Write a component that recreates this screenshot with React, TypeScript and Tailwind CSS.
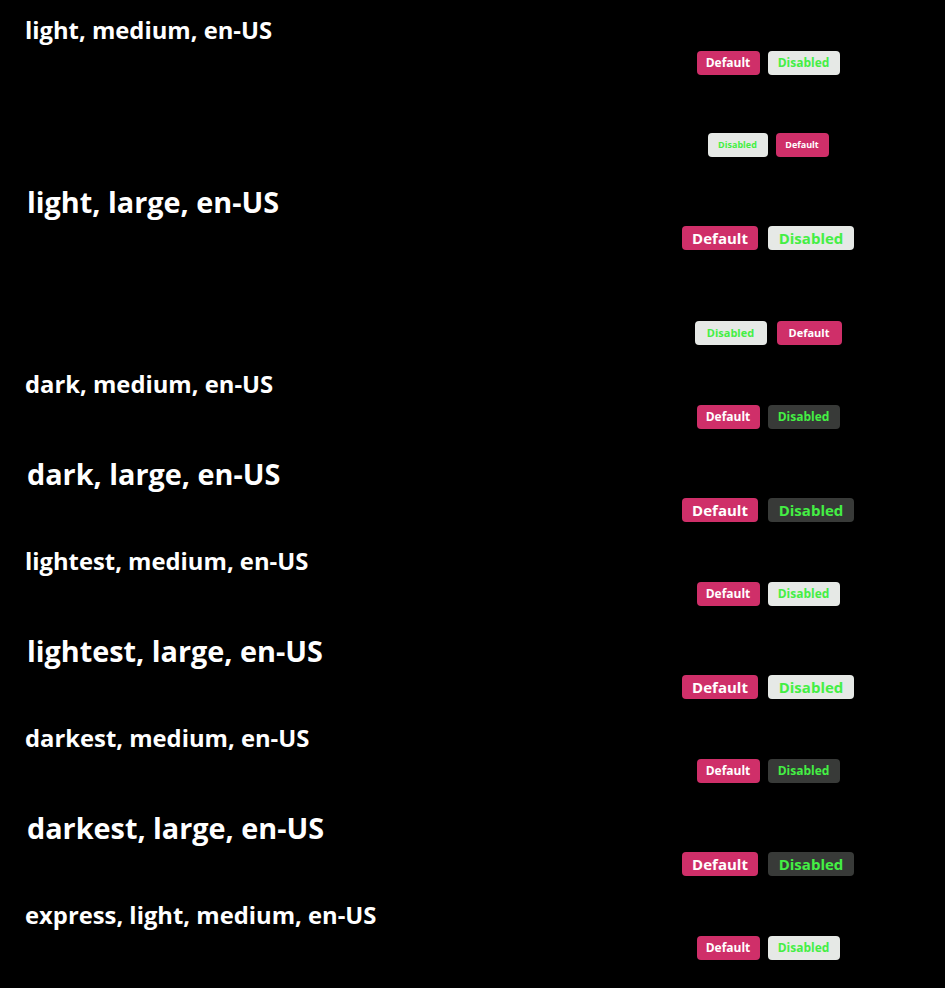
import React from "react";

type B = { label: string; kind: "default" | "disabledLight" | "disabledDark"; w: number; fs: string };

const font = { fontFamily: '"Open Sans", "Noto Sans", sans-serif' };

function Badge({ b }: { b: B }) {
  const cls =
    b.kind === "default"
      ? "bg-[#cf2f69] text-white"
      : b.kind === "disabledLight"
      ? "bg-[#e6e9e6] text-[#44ef44]"
      : "bg-[#383a38] text-[#44ef44]";
  return (
    <div
      className={`h-[24px] rounded-[4px] flex items-center justify-center font-bold ${cls} ${b.fs}`}
      style={{ width: b.w }}
    >
      {b.label}
    </div>
  );
}

function Row({ items, gap = "gap-2" }: { items: B[]; gap?: string }) {
  return (
    <div className={`h-[24px] pl-[591px] flex justify-center ${gap}`}>
      {items.map((b, i) => (
        <Badge key={i} b={b} />
      ))}
    </div>
  );
}

function MediumHeading({ text, h }: { text: string; h: string }) {
  return (
    <div className={`${h} flex items-end pl-[25px] pb-[7px]`}>
      <div className="text-[23.8px] leading-[28px] font-bold text-white">{text}</div>
    </div>
  );
}

function LargeHeading({ text, h }: { text: string; h: string }) {
  return (
    <div className={`${h} flex items-end pl-[27px] pb-[8px]`}>
      <div className="text-[28.8px] leading-[32px] font-bold text-white">{text}</div>
    </div>
  );
}

const medDef = (light: boolean): B[] => [
  { label: "Default", kind: "default", w: 63, fs: "text-[12px]" },
  { label: "Disabled", kind: light ? "disabledLight" : "disabledDark", w: 72, fs: "text-[12px]" },
];
const lgDef = (light: boolean): B[] => [
  { label: "Default", kind: "default", w: 76, fs: "text-[15px]" },
  { label: "Disabled", kind: light ? "disabledLight" : "disabledDark", w: 86, fs: "text-[15px]" },
];

export default function App() {
  return (
    <div className="w-[945px] h-[988px] bg-black overflow-hidden" style={font}>
      <MediumHeading text="light, medium, en-US" h="h-[51px]" />
      <Row items={medDef(true)} />
      <div className="h-[58px]" />
      <Row
        items={[
          { label: "Disabled", kind: "disabledLight", w: 60, fs: "text-[9px]" },
          { label: "Default", kind: "default", w: 53, fs: "text-[9px]" },
        ]}
      />
      <LargeHeading text="light, large, en-US" h="h-[69px]" />
      <Row gap="gap-[10px]" items={lgDef(true)} />
      <div className="h-[71px]" />
      <Row
        gap="gap-[10px]"
        items={[
          { label: "Disabled", kind: "disabledLight", w: 72, fs: "text-[11px]" },
          { label: "Default", kind: "default", w: 65, fs: "text-[11px]" },
        ]}
      />
      <MediumHeading text="dark, medium, en-US" h="h-[60px]" />
      <Row items={medDef(false)} />
      <LargeHeading text="dark, large, en-US" h="h-[69px]" />
      <Row gap="gap-[10px]" items={lgDef(false)} />
      <MediumHeading text="lightest, medium, en-US" h="h-[60px]" />
      <Row items={medDef(true)} />
      <LargeHeading text="lightest, large, en-US" h="h-[69px]" />
      <Row gap="gap-[10px]" items={lgDef(true)} />
      <MediumHeading text="darkest, medium, en-US" h="h-[60px]" />
      <Row items={medDef(false)} />
      <LargeHeading text="darkest, large, en-US" h="h-[69px]" />
      <Row gap="gap-[10px]" items={lgDef(false)} />
      <MediumHeading text="express, light, medium, en-US" h="h-[60px]" />
      <Row items={medDef(true)} />
    </div>
  );
}
